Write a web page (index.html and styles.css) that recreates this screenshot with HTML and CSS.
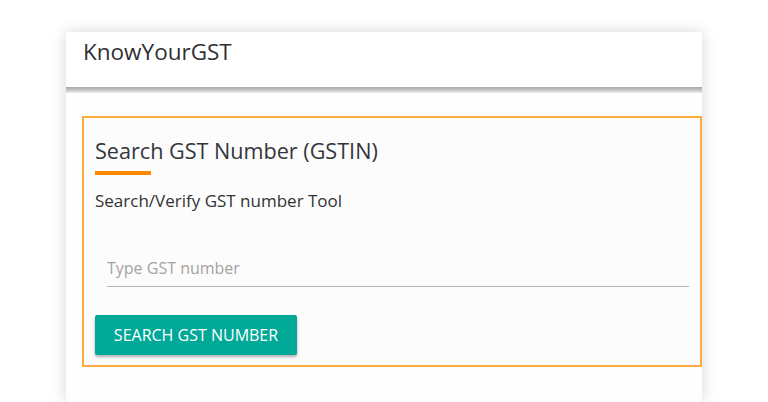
FILE: index.html
```html
<!DOCTYPE html>
<html lang="en">
<head>
<meta charset="utf-8">
<title>KnowYourGST</title>
<link rel="stylesheet" href="styles.css">
</head>
<body>
<div class="card">
  <header class="topbar">
    <div class="brand">KnowYourGST</div>
  </header>
  <div class="topbar-shadow"></div>
  <main class="content">
    <section class="search-box">
      <h1 class="title">Search GST Number (GSTIN)</h1>
      <div class="title-accent"></div>
      <p class="subtitle">Search/Verify GST number Tool</p>
      <div class="field">
        <input class="gst-input" type="text" placeholder="Type GST number">
      </div>
      <button class="search-btn" type="button">SEARCH GST NUMBER</button>
    </section>
  </main>
</div>
</body>
</html>
```

FILE: styles.css
```css
* { box-sizing: border-box; }
html, body {
  margin: 0;
  padding: 0;
  background: #ffffff;
  overflow: hidden;
}
body {
  font-family: "Open Sans", "Noto Sans", sans-serif;
  color: #333333;
}
.card {
  margin: 32px 0 0 66px;
  width: 636px;
  height: 370px;
  background: #fefefe;
  box-shadow: 0 0 14px rgba(0, 0, 0, 0.16);
}
.topbar {
  height: 55px;
  background: #ffffff;
  padding: 5px 0 0 17px;
}
.brand {
  font-size: 22.5px;
  line-height: 30px;
  color: #2f2f35;
}
.topbar-shadow {
  height: 6px;
  background: linear-gradient(#a9a9a9, #c4c4c4 50%, #eeeeee);
}
.content {
  padding: 23px 0 0 16px;
}
.search-box {
  width: 620px;
  height: 251px;
  border: 2px solid #ffab40;
  background: #fcfcfc;
  padding: 17.5px 0 0 11px;
}
.title {
  margin: 0;
  font-weight: 400;
  font-size: 21.6px;
  line-height: 30px;
  color: #35353d;
}
.title-accent {
  width: 56px;
  height: 4px;
  background: #ff8a00;
  margin-top: 5px;
}
.subtitle {
  margin: 15px 0 0 0;
  font-size: 17px;
  line-height: 22px;
  color: #333333;
}
.field {
  margin: 39px 0 0 12px;
  width: 582px;
  border-bottom: 1.5px solid #b3b3b3;
}
.gst-input {
  display: block;
  width: 100%;
  border: 0;
  outline: 0;
  background: transparent;
  padding: 0;
  height: 35px;
  font-family: "Open Sans", "Noto Sans", sans-serif;
  font-size: 16px;
  color: #333;
}
.gst-input::placeholder {
  color: #a3a3a3;
}
.search-btn {
  display: block;
  margin-top: 28px;
  width: 202px;
  height: 40px;
  border: 0;
  border-radius: 2px;
  background: #00a898;
  color: #ffffff;
  font-family: "Open Sans", "Noto Sans", sans-serif;
  font-size: 16px;
  padding: 0;
  box-shadow: 0 2px 3px rgba(0, 0, 0, 0.3);
}
```
